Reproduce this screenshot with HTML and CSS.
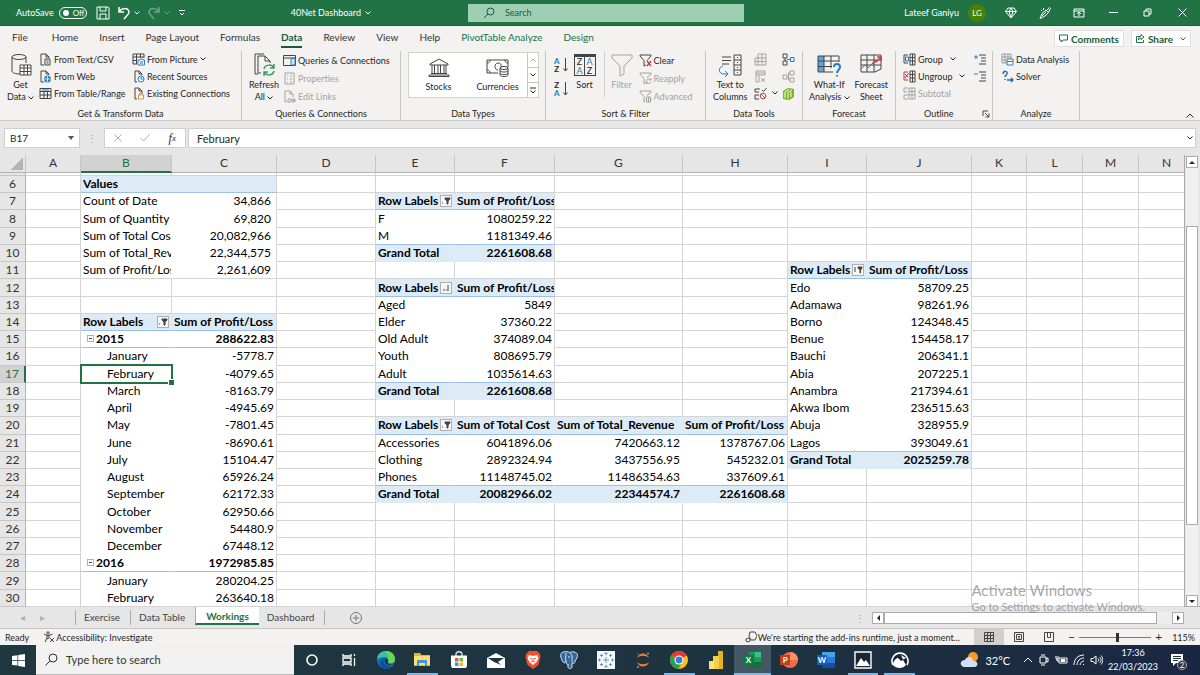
FILE: index.html
```
<!DOCTYPE html>
<html lang="en">
<head>
    <meta charset="UTF-8">
    <meta name="viewport" content="width=device-width, initial-scale=1.0">
    <title>40Net Dashboard - Excel</title>
    <link rel="stylesheet" href="styles.css">
</head>
<body>

    <!-- Title bar -->
    <header class="titlebar">
        <div class="title-left">
            <label class="autosave" for="autosave">AutoSave <input type="checkbox" id="autosave"><span class="toggle">Off</span></label>
            <button class="tb-btn" aria-label="Save"><svg width="14" height="14" viewBox="0 0 14 14"><path d="M1 1h11l1 1v11H1zM4 1v4h6V1M4 13V8h6v5" class="line-w"/></svg></button>
            <button class="tb-btn undo" aria-label="Undo"><svg width="14" height="14" viewBox="0 0 14 14"><path d="M2 1v5h5M2 6c2-4 9-5 10 0c0 3-3 4-5 7" class="line-w bold"/></svg><svg class="chev" width="6" height="4" viewBox="0 0 6 4"><path d="M.5.5 3 3 5.500.5"/></svg></button>
            <button class="tb-btn dim" aria-label="Redo"><svg width="14" height="14" viewBox="0 0 14 14"><path d="M12 1v5H7M12 6c-2-4-9-5-10 0c0 3 3 4 5 7" class="line-w bold"/></svg><svg class="chev" width="6" height="4" viewBox="0 0 6 4"><path d="M.5.5 3 3 5.500.5"/></svg></button>
            <button class="tb-btn qat" aria-label="Customize Quick Access Toolbar"><svg width="6" height="6" viewBox="0 0 6 6"><path d="M0 .5h6M1 3l2 2 2-2" class="line-w"/></svg></button>
            <button class="doc-title">40Net Dashboard <svg class="chev" width="6" height="4" viewBox="0 0 6 4"><path d="M.5.5 3 3 5.500.5"/></svg></button>
        </div>
        <div class="title-search">
            <svg width="12" height="12" viewBox="0 0 12 12"><circle cx="7.500" cy="4.500" r="3.500"/><path d="M5 7 1 11"/></svg>
            <input type="text" placeholder="Search" aria-label="Search">
        </div>
        <div class="title-right">
            <span>Lateef Ganiyu</span>
            <span class="avatar">LG</span>
            <button class="win-btn" aria-label="Premium"><svg width="12" height="12" viewBox="0 0 12 12"><path d="M3 1h6l2.500 3.500L6 11 .5 4.500zM.5 4.500h11M4 4.500 6 11l2-6.500L6 1 4 4.500" class="line-w"/></svg></button>
            <button class="win-btn" aria-label="Drawing"><svg width="12" height="12" viewBox="0 0 12 12"><path d="M1 11.500 3 6.500 7 3l2.500 2.500L6 9zM3 9l4-4M8 3l2.500-2.500 1 1L9.500 5M4.500 1v2M2 3l1 1" class="line-w"/></svg></button>
            <button class="win-btn" aria-label="Ribbon display options"><svg width="12" height="10" viewBox="0 0 12 10"><path d="M1 1h10v8H1zM1 3h10M6 8V4.500M4 6l2-2 2 2" class="line-w"/></svg></button>
            <button class="win-btn" aria-label="Minimize"><svg width="9" height="9" viewBox="0 0 9 9"><path d="M0 4.500h9" class="line-w"/></svg></button>
            <button class="win-btn" aria-label="Restore"><svg width="9" height="9" viewBox="0 0 9 9"><path d="M1 3h5v5H1zM3 3V1h5v5H6" class="line-w"/></svg></button>
            <button class="win-btn" aria-label="Close"><svg width="9" height="9" viewBox="0 0 9 9"><path d="M.5.5l8 8M8.500.5l-8 8" class="line-w"/></svg></button>
        </div>
    </header>

    <!-- Ribbon tabs -->
    <nav class="tabs">
        <a href="#" class="tab">File</a>
        <a href="#" class="tab">Home</a>
        <a href="#" class="tab">Insert</a>
        <a href="#" class="tab">Page Layout</a>
        <a href="#" class="tab">Formulas</a>
        <a href="#" class="tab active">Data</a>
        <a href="#" class="tab">Review</a>
        <a href="#" class="tab">View</a>
        <a href="#" class="tab">Help</a>
        <a href="#" class="tab context">PivotTable Analyze</a>
        <a href="#" class="tab context">Design</a>
        <div class="tab-actions">
            <button class="action"><svg width="9" height="9" viewBox="0 0 9 9"><path d="M.5 1h8v5H4L2 8V6H.5z"/></svg>Comments</button>
            <button class="action"><svg width="9" height="9" viewBox="0 0 9 9"><path d="M4 2.500H.5v6h7V6M5 .5l3 2.500-3 2.500V4C4 4 3 5 2.500 6 2.500 4 3 2.500 5 2z"/></svg>Share<svg class="chev" width="6" height="4" viewBox="0 0 6 4"><path d="M.5.5 3 3 5.500.5"/></svg></button>
        </div>
    </nav>

    <!-- Ribbon -->
    <section class="ribbon">
        <div class="group g-get">
            <div class="group-body">
                <button class="big"><svg class="ico" width="24" height="24" viewBox="0 0 24 24"><path class="k" d="M3 4v14c0 2 4 3 8 3M17 4v6"/><ellipse class="k" cx="10" cy="4" rx="7" ry="2.500"/><path class="k" fill="#fff" d="M11 12h11v10H11zM11 15h11M11 18.500h11M15 12v10M18.500 12v10"/></svg><span>Get<br>Data <svg class="chev" width="6" height="4" viewBox="0 0 6 4"><path d="M.5.5 3 3 5.500.5"/></svg></span></button>
                <div class="stack">
                    <button class="small"><svg class="ico" width="13" height="13" viewBox="0 0 13 13"><path class="k" d="M5 12H2V1h5l3 3v1M7 1v3h3M6 6h5v6H6zM7.500 8h2M7.500 10h2"/></svg>From Text/CSV</button>
                    <button class="small"><svg class="ico" width="13" height="13" viewBox="0 0 13 13"><path class="k" d="M5 12H2V1h5l3 3v1M7 1v3h3"/><circle cx="8.500" cy="9" r="3.500" fill="#2f87c5"/><path d="M5.500 9h6M8.500 6v6" stroke="#fff" stroke-width=".7"/></svg>From Web</button>
                    <button class="small"><svg class="ico" width="13" height="13" viewBox="0 0 13 13"><path class="k" d="M1 1.500h11v10H1zM1 4.500h11M1 8h11M5 4.500v7M8.500 4.500v7"/><path class="b" d="M3 3h7"/></svg>From Table/Range</button>
                </div>
                <div class="stack">
                    <button class="small"><svg class="ico" width="13" height="13" viewBox="0 0 13 13"><path class="k" d="M5 11H1V1h11v4M1 4h11M1 7.500h4M4.500 1v10M8.500 1v4"/><path class="b" fill="#fff" d="M6 7h2l.5-1h2l.5 1h1.500v5H6z"/><circle class="b" cx="9.500" cy="9.500" r="1.200"/></svg>From Picture <svg class="chev" width="6" height="4" viewBox="0 0 6 4"><path d="M.5.5 3 3 5.500.5"/></svg></button>
                    <button class="small"><svg class="ico" width="13" height="13" viewBox="0 0 13 13"><path class="k" d="M5 12H3V1h4l3 3v1M7 1v3h3"/><circle class="b" fill="#fff" cx="9" cy="9" r="3"/><path class="b" d="M9 7v2h2"/></svg>Recent Sources</button>
                    <button class="small"><svg class="ico" width="13" height="13" viewBox="0 0 13 13"><path class="k" d="M5 12H3V1h4l3 3v2M7 1v3h3"/><path d="M6.500 8h5v4h-5zM7.500 8V6.500h3V8" fill="#fff" stroke="#e08a2e"/></svg>Existing Connections</button>
                </div>
            </div>
            <div class="group-label">Get &amp; Transform Data</div>
        </div>

        <div class="group g-queries">
            <div class="group-body">
                <button class="big"><svg class="ico" width="24" height="24" viewBox="0 0 24 24"><path class="k" d="M6 21H3V1h9M9 20H6V3h7l5 5v2M13 3v5h5"/><path class="g" d="M12 16c1-5 8-5 10-1M22 11v4h-4M22 18c-1 5-8 5-10 1M12 23v-4h4"/></svg><span>Refresh<br>All <svg class="chev" width="6" height="4" viewBox="0 0 6 4"><path d="M.5.5 3 3 5.500.5"/></svg></span></button>
                <div class="stack loose">
                    <button class="small"><svg class="ico" width="13" height="13" viewBox="0 0 13 13"><path class="k" d="M.5 1.500h12v10H.5zM.5 4h12"/><path class="b" fill="#d5e8f5" d="M8 4.500h4v6.500H8z"/></svg>Queries &amp; Connections</button>
                    <button class="small" disabled><svg class="ico" width="13" height="13" viewBox="0 0 13 13"><path class="k" d="M2 1h9v11H2zM4 4h1M4 7h1M4 10h1M7 4h2M7 7h2M7 10h2"/></svg>Properties</button>
                    <button class="small" disabled><svg class="ico" width="13" height="13" viewBox="0 0 13 13"><path class="k" d="M4 12H2V1h5l3 3v3M7 1v3h3M5 9h3v3H5zM8 10.500h4M9 9h3v3H9"/></svg>Edit Links</button>
                </div>
            </div>
            <div class="group-label">Queries &amp; Connections</div>
        </div>

        <div class="group g-types">
            <div class="group-body">
                <div class="gallery">
                    <button class="type"><svg class="ico" width="22" height="20" viewBox="0 0 22 20"><path class="k" d="M2 6l9-5 9 5v1H2zM4 7v8M6.500 7v8M10 7v8M12.500 7v8M16 7v8M18 7v8M3 15.500h16M1 18.500h20v-1.500H1z"/></svg>Stocks</button>
                    <button class="type"><svg class="ico" width="24" height="20" viewBox="0 0 24 20"><path class="k" d="M12 15H1V2h21v7M4 15c0-2-1-3-3-3M1 5c2 0 3-1 3-3M19 2c0 2 1 3 3 3M12 12c-4 0-4-7 0-7s3 3 3 4"/><path class="k" fill="#fff" d="M14 10v7c0 2 8 2 8 0v-7M14 12.500c0 2 8 2 8 0M14 15c0 2 8 2 8 0"/><ellipse class="k" fill="#fff" cx="18" cy="10" rx="4" ry="1.500"/></svg>Currencies</button>
                    <div class="gallery-nav">
                        <button aria-label="Previous" disabled><svg class="chev" width="6" height="4" viewBox="0 0 6 4"><path d="M.5 3.500 3 1l2.500 2.500"/></svg></button>
                        <button aria-label="Next"><svg class="chev" width="6" height="4" viewBox="0 0 6 4"><path d="M.5.5 3 3 5.500.5"/></svg></button>
                        <button aria-label="More"><svg class="chev" width="6" height="7" viewBox="0 0 6 7"><path d="M0 1h6M.5 3.500 3 6l2.500-2.500"/></svg></button>
                    </div>
                </div>
            </div>
            <div class="group-label">Data Types</div>
        </div>

        <div class="group g-sort">
            <div class="group-body">
                <div class="az-col">
                    <button class="az" aria-label="Sort A to Z"><span class="az-text"><i>A</i>Z</span><svg class="ico" width="5" height="14" viewBox="0 0 5 14"><path class="k" d="M2.500 0v13M.5 10.500l2 2.500 2-2.500"/></svg></button>
                    <button class="az" aria-label="Sort Z to A"><span class="az-text">Z<i>A</i></span><svg class="ico" width="5" height="14" viewBox="0 0 5 14"><path class="k" d="M2.500 0v13M.5 10.500l2 2.500 2-2.500"/></svg></button>
                </div>
                <button class="big sort"><span class="sort-box"><b>Z</b><i>A</i><i>A</i><b>Z</b></span><span>Sort</span></button>
                <button class="big filter" disabled><svg class="ico" width="22" height="24" viewBox="0 0 22 24"><path class="k" d="M1 2h20v3l-8 8v8l-4 2V13L1 5z"/></svg><span>Filter</span></button>
                <div class="stack loose">
                    <button class="small"><svg class="ico" width="13" height="13" viewBox="0 0 13 13"><path class="k" d="M1 1h11v1L8 6.500M5 12V6.500L1 2V1M5 12l2-1"/><path d="M8 7l4 5M12 7l-4 5" stroke="#d13438" stroke-width="1.300"/></svg>Clear</button>
                    <button class="small" disabled><svg class="ico" width="13" height="13" viewBox="0 0 13 13"><path class="k" d="M1 1h11v1L8 5.500M5 12V6.500L1 2V1M5 12l1-.5M7 9c1-3 4-2 5-1M12 6v2h-2M12 10c-1 2-4 2-5 0M7 12v-2h2"/></svg>Reapply</button>
                    <button class="small" disabled><svg class="ico" width="13" height="13" viewBox="0 0 13 13"><path class="k" d="M1 1h11v1L8 5.500M5 12V6.500L1 2V1M5 12l1-.5M7.500 7h4v5h-4zM11.500 9.500h1M6.500 9.500h1M9.500 7v5"/></svg>Advanced</button>
                </div>
            </div>
            <div class="group-label">Sort &amp; Filter</div>
        </div>

        <div class="group g-tools">
            <div class="group-body">
                <button class="big"><svg class="ico" width="24" height="24" viewBox="0 0 24 24"><path class="k" d="M4 4h9M4 7.500h9M4 11h7M16 2h7v20h-7zM16 7h7M16 12h7M16 17h7M19 4.500h1M19 9.500h1M19 14.500h1M19 19.500h1"/><path class="b" d="M5 13c-5 1-5 8 1 8h3M7 18l3 3-3 3"/></svg><span>Text to<br>Columns</span></button>
                <div class="stack icons">
                    <button class="small" aria-label="Flash Fill" disabled><svg class="ico" width="13" height="13" viewBox="0 0 13 13"><path class="k" d="M4 1h8v11H1V5h3zM4 5h8M1 8.500h11M4 5v7M8 1v11"/></svg></button>
                    <button class="small" aria-label="Remove Duplicates" disabled><svg class="ico" width="13" height="13" viewBox="0 0 13 13"><path class="k" d="M2 1h9v4H2zM2 3h9M2 5v7h3V5M7 8l4 4M11 8l-4 4"/></svg></button>
                    <button class="small" aria-label="Data Validation"><svg class="ico" width="13" height="13" viewBox="0 0 13 13"><path class="k" d="M6 2H1v3h4M5 8H1v4h4M8 3l1.500 1.500L12.500 1"/><circle cx="9" cy="9" r="2.800" stroke="#d13438" fill="#fff"/><path d="M7 7l4 4" stroke="#d13438"/></svg><svg class="chev" width="6" height="4" viewBox="0 0 6 4"><path d="M.5.5 3 3 5.500.5"/></svg></button>
                </div>
                <div class="stack icons">
                    <button class="small" aria-label="Consolidate"><svg class="ico" width="13" height="13" viewBox="0 0 13 13"><path class="k" d="M1 1h4v4H1zM1 8h4v4H1zM3 5v3"/><path class="b" d="M5 6.500h3M8.500 4.500H12v4H8.500z"/></svg></button>
                    <button class="small" aria-label="Relationships" disabled><svg class="ico" width="13" height="13" viewBox="0 0 13 13"><path class="k" d="M1 5h4v4H1zM8 1h4v4H8zM8 8h4v4H8zM5 7h1.500V3H8M6.500 7v3H8"/></svg></button>
                    <button class="small" aria-label="Manage Data Model"><svg class="ico" width="13" height="13" viewBox="0 0 13 13"><path fill="#7ab51d" d="M1 4l5-3 6 1v8l-5 3-6-1z"/><path d="M3 11V5l4-2.500M6 11.500V5.500l4-2.500M9 10V5" stroke="#fff"/></svg></button>
                </div>
            </div>
            <div class="group-label">Data Tools</div>
        </div>

        <div class="group g-forecast">
            <div class="group-body">
                <button class="big"><svg class="ico" width="24" height="24" viewBox="0 0 24 24"><path fill="#58a6dd" d="M1 3h6v16H1z"/><path class="k" d="M16 19H1V3h21v6M1 8h21M1 13.500h14M7 3v16M14 3v12"/><path class="b thick" d="M17 14c0-4 6-4 6 0 0 3-3 3-3 6M20 22v1.500"/></svg><span>What-If<br>Analysis <svg class="chev" width="6" height="4" viewBox="0 0 6 4"><path d="M.5.5 3 3 5.500.5"/></svg></span></button>
                <button class="big"><svg class="ico" width="24" height="24" viewBox="0 0 24 24"><path class="k" d="M2 2h20v14l-6 3H2zM2 7h20M2 12h20M8 2v17M15 2v17"/><path class="b" d="M2 16l4-4 3 3 4-4"/><path d="M13 11l3-3 1 1 5-5M18 4h4v4" stroke="#d13438" stroke-width="1.300"/></svg><span>Forecast<br>Sheet</span></button>
            </div>
            <div class="group-label">Forecast</div>
        </div>

        <div class="group g-outline">
            <div class="group-body">
                <div class="stack">
                    <button class="small"><svg class="ico" width="13" height="13" viewBox="0 0 13 13"><path class="k" d="M5 2H1v8h4M7 1h5v11H7zM7 4.500h5M7 8h5M9.500 1v11"/><path class="b" d="M2.500 4h3v4h-3z"/></svg>Group <svg class="chev far" width="6" height="4" viewBox="0 0 6 4"><path d="M.5.5 3 3 5.500.5"/></svg></button>
                    <button class="small"><svg class="ico" width="13" height="13" viewBox="0 0 13 13"><path class="k" d="M7 1h5v11H7zM7 4.500h5M7 8h5M9.500 1v11"/><path d="M5 2H1v8h4M2 8l4-5M2 4l3 3" stroke="#d13438"/></svg>Ungroup <svg class="chev far" width="6" height="4" viewBox="0 0 6 4"><path d="M.5.5 3 3 5.500.5"/></svg></button>
                    <button class="small" disabled><svg class="ico" width="13" height="13" viewBox="0 0 13 13"><path class="k" d="M5 1H1v4h3M5 8H1v4h4M6 1h6v11H6zM6 4.500h6M6 8h6M9 1v11"/></svg>Subtotal</button>
                </div>
                <div class="stack end">
                    <button class="small" aria-label="Show Detail"><svg class="ico" width="13" height="13" viewBox="0 0 13 13"><path class="b" d="M0 4h4M2 2v4"/><path class="k" d="M5 2h7M7 5h5M7 8h5M5 11h7"/></svg></button>
                    <button class="small" aria-label="Hide Detail"><svg class="ico" width="13" height="13" viewBox="0 0 13 13"><path class="b" d="M0 4h4"/><path class="k" d="M5 2h7M7 5h5M7 8h5M5 11h7"/></svg></button>
                </div>
            </div>
            <div class="group-label">Outline<button class="launcher" aria-label="Outline settings"><svg class="ico" width="8" height="8" viewBox="0 0 8 8"><path class="k" d="M1 6V1h5M3 3l4 4M7 3.500V7H3.500"/></svg></button></div>
        </div>

        <div class="group g-analyze">
            <div class="group-body">
                <div class="stack">
                    <button class="small"><svg class="ico" width="13" height="13" viewBox="0 0 13 13"><path stroke="#9a9a9a" d="M1 1h9v9H1zM1 4h9M1 7h4M4 1v9M7 1v4"/><path fill="#fff" class="b" d="M6 6h6v6H6zM6 8.500h6"/></svg>Data Analysis</button>
                    <button class="small"><svg class="ico" width="13" height="13" viewBox="0 0 13 13"><path stroke="#2b6cb0" stroke-width="1.500" d="M2 4c0-4 5-3 4 0-.5 1-2 1-2 3M4 9v1M6 10h6M10 8l2 2-2 2"/></svg>Solver</button>
                </div>
            </div>
            <div class="group-label">Analyze</div>
        </div>
        <button class="collapse" aria-label="Collapse ribbon"><svg class="chev" width="8" height="5" viewBox="0 0 8 5"><path d="M.5 4.500 4 1l3.500 3.500"/></svg></button>
    </section>

    <!-- Formula bar -->
    <section class="formula">
        <div class="namebox"><input type="text" value="B17" aria-label="Name box"><span class="caret"></span></div>
        <span class="dots">⋮</span>
        <div class="fx">
            <button aria-label="Cancel" disabled><svg width="8" height="8" viewBox="0 0 8 8"><path d="M.5.5l7 7M7.500.5l-7 7"/></svg></button>
            <button aria-label="Enter" disabled><svg width="10" height="8" viewBox="0 0 10 8"><path d="M.5 4l3 3L9.500.5"/></svg></button>
            <button aria-label="Insert function" class="fn">f<sub>x</sub></button>
        </div>
        <div class="formula-input"><input type="text" value="February" aria-label="Formula"><svg class="chev" width="6" height="4" viewBox="0 0 6 4"><path d="M.5.5 3 3 5.500.5"/></svg></div>
    </section>

    <!-- Worksheet -->
    <main class="sheet">
        <div class="grid-wrap">
            <table class="grid" id="grid"></table>
        </div>
        <div class="vscroll">
            <button aria-label="Scroll up"><span class="tri up"></span></button>
            <div class="vtrack"><div class="vthumb"></div></div>
            <button aria-label="Scroll down"><span class="tri down"></span></button>
        </div>
        <div class="watermark"><strong>Activate Windows</strong><span>Go to Settings to activate Windows.</span></div>
    </main>

    <!-- Sheet tabs -->
    <nav class="sheetbar">
        <div class="sheet-nav"><span>◂</span><span>▸</span></div>
        <a href="#" class="sheet-tab">Exercise</a>
        <a href="#" class="sheet-tab">Data Table</a>
        <a href="#" class="sheet-tab active">Workings</a>
        <a href="#" class="sheet-tab">Dashboard</a>
        <button class="add" aria-label="New sheet"><svg width="12" height="12" viewBox="0 0 12 12"><circle cx="6" cy="6" r="5.500"/><path d="M6 3v6M3 6h6"/></svg></button>
        <div class="hscroll">
            <span class="dots">⋮</span>
            <button aria-label="Scroll left"><span class="tri left"></span></button>
            <div class="htrack"><div class="hthumb"></div></div>
            <button aria-label="Scroll right"><span class="tri right"></span></button>
        </div>
    </nav>

    <!-- Status bar -->
    <footer class="status">
        <span>Ready</span>
        <span class="access"><svg class="ico" width="12" height="12" viewBox="0 0 12 12"><circle class="k" cx="5" cy="2" r="1.200"/><path class="k" d="M1 3l3 1.500h2L9.500 3M4 4.500V7l-2 4M6 4.500V7M7 7l4 4M11 7l-4 4M4 8l2-1"/></svg>Accessibility: Investigate</span>
        <span class="addins"><svg class="ico" width="12" height="12" viewBox="0 0 12 12"><path class="k" d="M5 1h5l2 4-2 4H6L4 5zM3 7l2 1v2l-2 1-2-1V8z"/></svg>We're starting the add-ins runtime, just a moment...</span>
        <div class="views">
            <button class="view on" aria-label="Normal"><svg class="ico" width="10" height="10" viewBox="0 0 10 10"><path class="k" d="M.5.5h9v9h-9zM.5 3.500h9M.5 6.500h9M3.500.5v9M6.500.5v9"/></svg></button>
            <button class="view" aria-label="Page layout"><svg class="ico" width="10" height="10" viewBox="0 0 10 10"><path class="k" d="M.5.5h9v9h-9zM2.500 2.500h5v5h-5zM4 4.500h2M4 6h2"/></svg></button>
            <button class="view" aria-label="Page break preview"><svg class="ico" width="10" height="10" viewBox="0 0 10 10"><path class="k" d="M.5.5h9v9h-9zM3.500.5v5h3v-5"/></svg></button>
        </div>
        <div class="zoom">
            <button aria-label="Zoom out">−</button>
            <input type="range" min="0" max="100" value="53" aria-label="Zoom">
            <button aria-label="Zoom in">+</button>
            <span>115%</span>
        </div>
    </footer>

    <!-- Taskbar -->
    <footer class="taskbar">
        <button class="start" aria-label="Start"><svg width="13" height="13" viewBox="0 0 13 13"><path fill="#fff" d="M0 2l5.500-.8V6H0zM6.200 1.100 13 0v6H6.200zM0 6.700h5.500v4.900L0 10.900zM6.200 6.700H13V13l-6.800-1z"/></svg></button>
        <div class="task-search"><svg width="13" height="13" viewBox="0 0 13 13"><circle cx="8" cy="5" r="4"/><path d="M5 8l-4.500 4.500"/></svg><input type="text" placeholder="Type here to search" aria-label="Type here to search"></div>
        <div class="apps">
            <button class="app" aria-label="Cortana"><svg width="18" height="18" viewBox="0 0 18 18"><circle cx="9" cy="9" r="5" fill="none" stroke="#fff" stroke-width="1.600"/></svg></button>
            <button class="app" aria-label="Task view"><svg width="18" height="18" viewBox="0 0 18 18"><path d="M3 3v2h8V3M3 7h8v4H3zM3 15v-2h8v2M14.500 3v2M14.500 7v8" fill="none" stroke="#fff" stroke-width="1.300"/></svg></button>
            <button class="app" aria-label="Edge"><svg width="20" height="20" viewBox="0 0 20 20"><circle cx="10" cy="10" r="9" fill="#1670b8"/><path d="M1 10C1 4 5 1 10 1c6 0 9 4 9 8 0 4-4 5-7 4 1-1 1-5-3-6-4 0-7 1-8 3z" fill="#35c1a2"/><path d="M9 1c6-.5 10 4 10 8 0 4-4 5-7 4 1-1 1-3 0-4 1-3-1-6-3-8z" fill="#69d84f"/><path d="M8 8c-2 5 2 9 9 8-5 5-12 3-13-2 0-3 1-5 4-6z" fill="#0c50a0"/><path d="M9 9c2-1 3 0 3 2l-.5 2c1 1 3 1.500 5 1-2 2-6 1-7-1-1-1-1-3-.5-4z" fill="#20343f"/></svg></button>
            <button class="app open" aria-label="File Explorer"><svg width="18" height="18" viewBox="0 0 18 18"><path fill="#e8b33a" d="M1 2h6l1.500 2H17v11H1z"/><path fill="#ffdd78" d="M1 5h16v9H1z"/><path fill="#3f98d8" d="M4 9h10v6h-2v-3H6v3H4z"/></svg></button>
            <button class="app" aria-label="Microsoft Store"><svg width="18" height="18" viewBox="0 0 18 18"><path d="M6 5V3c0-3 6-3 6 0v2" fill="none" stroke="#dce6ea" stroke-width="1.300"/><path fill="#fff" d="M1 4.500h16V15l-1 2H2l-1-2z"/><path fill="#e9573f" d="M5 7h3.500v3.500H5z"/><path fill="#6cb43f" d="M9.500 7H13v3.500H9.500z"/><path fill="#2c96d6" d="M5 11.500h3.500V15H5z"/><path fill="#f5b92b" d="M9.500 11.500H13V15H9.500z"/></svg></button>
            <button class="app" aria-label="Mail"><svg width="20" height="18" viewBox="0 0 20 18"><path fill="#fff" d="M1 7l9-5 9 5v10H1z"/><path fill="#20343f" d="M2 7h16l-6 4 3 3-7-3z"/></svg></button>
            <button class="app" aria-label="Brave"><svg width="18" height="20" viewBox="0 0 18 20"><path fill="#f0502a" d="M5 1h8l3 3 .5 3-2 8L9 19l-5.500-4-2-8L2 4z"/><path fill="#fff" d="M5 5l4 1 4-1 1.500 3-2 4L9 15l-3.500-3-2-4z"/><path d="M6 8l2 1M12 8l-2 1M9 8v3M7 12l2-1 2 1" stroke="#f0502a" fill="none"/></svg></button>
            <button class="app" aria-label="pgAdmin"><svg width="20" height="20" viewBox="0 0 20 20"><path fill="#35689a" stroke="#dce6ef" d="M5 2c-4 0-4 4-2 8 1 3 3 4 4 1 0 3 1 4 2 3v3c0 2 4 2 4 0v-4c2 1 4-1 3-2 3-4 4-8-1-9-2-.500-3 0-4 .500C9 1.500 7 1.500 5 2z"/><path d="M7 11c-1-2 0-5 0-8M11 3c3 2 2 6 2 9M10 6v2" stroke="#dce6ef" fill="none"/></svg></button>
            <button class="app" aria-label="Tableau"><svg width="18" height="18" viewBox="0 0 18 18"><path fill="#f4f7fa" d="M0 0h18v18H0z"/><path d="M9 6v6M6 9h6M9 1v3M7.500 2.500h3M9 14v3M7.500 15.500h3M2.500 7.500v3M1 9h3M15.500 7.500v3M14 9h3M4.500 3v3M3 4.500h3M13.500 3v3M12 4.500h3M4.500 12v3M3 13.500h3M13.500 12v3M12 13.500h3" stroke="#5a7fa5" stroke-width=".8" fill="none"/></svg></button>
            <button class="app" aria-label="Jupyter"><svg width="18" height="18" viewBox="0 0 18 18"><path fill="#ef7f32" d="M3 7c2-6 10-6 12 0-3-3-9-3-12 0zM3 11c2 6 10 6 12 0-3 3-9 3-12 0z"/><g fill="#9aa5ab"><circle cx="14" cy="2.500" r="1"/><circle cx="4" cy="3" r=".6"/><circle cx="4" cy="16" r="1"/></g></svg></button>
            <button class="app open" aria-label="Chrome"><svg width="20" height="20" viewBox="0 0 20 20"><circle cx="10" cy="10" r="9" fill="#fbc116"/><path fill="#e33b2e" d="M10 10 2.200 5.500a9 9 0 0 1 15.600 0z"/><path fill="#2da04f" d="M10 10 2.200 5.500A9 9 0 0 0 9.500 19L13 12z"/><circle cx="10" cy="10" r="4.500" fill="#fff"/><circle cx="10" cy="10" r="3.400" fill="#3b78e7"/></svg></button>
            <button class="app" aria-label="Power BI"><svg width="18" height="20" viewBox="0 0 18 20"><path fill="#e8b11c" d="M11 1h5v18h-5z"/><path fill="#f6cf45" d="M6 6h6v13H6z"/><path fill="#fbe07c" d="M2 11h5v8H2z"/></svg></button>
            <button class="app open current" aria-label="Excel"><svg width="20" height="20" viewBox="0 0 20 20"><path fill="#1f9a5d" d="M6 2h12v16H6z"/><path fill="#35c481" d="M12 2h6v5h-6z"/><path fill="#1a6c40" d="M12 12h6v6h-6zM6 12h6v6H6z"/><path fill="#107c41" d="M1 5h10v10H1z"/></svg><b>X</b></button>
            <button class="app" aria-label="PowerPoint"><svg width="20" height="20" viewBox="0 0 20 20"><circle cx="11" cy="10" r="8" fill="#ed6c47"/><path fill="#ff8f6b" d="M11 2a8 8 0 0 1 8 8h-8z"/><path fill="#c43e1c" d="M1 5h10v10H1z"/></svg><b>P</b></button>
            <button class="app" aria-label="Word"><svg width="20" height="20" viewBox="0 0 20 20"><path fill="#41a5ee" d="M6 2h13v5H6z"/><path fill="#2b7cd3" d="M6 7h13v6H6z"/><path fill="#164d9b" d="M6 13h13v5H6z"/><path fill="#185abd" d="M1 5h10v10H1z"/></svg><b>W</b></button>
            <button class="app open" aria-label="Photos"><svg width="18" height="18" viewBox="0 0 18 18"><path d="M1 1h16v16H1z" fill="#1b2631" stroke="#fff" stroke-width="1.400"/><path fill="#fff" d="M2 15l5-8 3 4 2-2 4 6z"/></svg></button>
            <button class="app open" aria-label="Snip"><svg width="20" height="18" viewBox="0 0 20 18"><path d="M3 14a8 8 0 1 1 14 0" fill="#1b2631" stroke="#fff" stroke-width="1.600"/><path fill="#fff" d="M3 14c0-4 3-7 5-7l3 3 2-1 3 5c-3 4-10 4-13 0zM11 4l5 3-3 1.500z"/></svg></button>
        </div>
        <div class="tray">
            <svg width="20" height="18" viewBox="0 0 20 18"><circle cx="13" cy="6" r="5" fill="#f59b23"/><path fill="#cfe0f5" d="M4 16c-5-1-4-7 1-7 1-4 8-4 8 1 5-1 6 5 2 6z"/></svg>
            <span class="temp">32°C</span>
            <svg class="t-ico" width="10" height="12" viewBox="0 0 10 12"><path d="M1 8l4-4 4 4"/></svg>
            <svg class="t-ico" width="12" height="12" viewBox="0 0 12 12"><path d="M2 3h6v6H2zM8 5l2-1v4L8 7M3 1h4M3 11h4"/></svg>
            <svg class="t-ico" width="13" height="12" viewBox="0 0 13 12"><path d="M4 4h8v5H4zM1 2v3h2V2M2 5v2h2"/><path fill="#fff" d="M6 5.500h4v2H6z"/></svg>
            <svg class="t-ico" width="12" height="12" viewBox="0 0 12 12"><path d="M1 11C1 5 5 1 11 1M4 11c0-4 3-7 7-7M7 11c0-2 2-4 4-4M10 11l1-1"/></svg>
            <svg class="t-ico" width="13" height="12" viewBox="0 0 13 12"><path d="M1 4.500h2L6 2v8L3 7.500H1zM8 4.500c1 1 1 2 0 3M9.500 3c2 2 2 4 0 6M11 1.500c2.500 3 2.500 6 0 9"/></svg>
            <div class="clock">17:36<br>22/03/2023</div>
            <button class="notify" aria-label="Notifications"><svg width="14" height="14" viewBox="0 0 14 14"><path fill="#fff" d="M1 1h12v9H6l-3 3v-3H1z"/><path d="M3 3.500h8M3 5.500h8M3 7.500h5" stroke="#20343f"/></svg><span class="count">2</span></button>
        </div>
    </footer>

    <script src="script.js"></script>
</body>
</html>
```

FILE: styles.css
```
* {
    box-sizing: border-box;
}
body {
    margin: 0;
    height: 100vh;
    display: flex;
    flex-direction: column;
    overflow: hidden;
    font-family: Lato, "Open Sans", sans-serif;
    font-size: 9px;
    color: #262626;
    background: #e6e6e6;
}
button, input {
    font: inherit;
    color: inherit;
    background: none;
    border: none;
    padding: 0;
    margin: 0;
    outline: none;
}
button {
    display: flex;
    align-items: center;
    justify-content: center;
}
a {
    color: inherit;
    text-decoration: none;
}
svg {
    flex: none;
}
.chev {
    fill: none;
    stroke: currentColor;
}

/* icon strokes */
.ico {
    fill: none;
}
.k {
    stroke: #444;
}
.b {
    stroke: #2b7cc0;
}
.g {
    stroke: #3c9a5f;
    stroke-width: 1.5;
}
.thick {
    stroke-width: 2;
}
.line-w {
    fill: none;
    stroke: #fff;
}
.bold {
    stroke-width: 1.5;
}
button:disabled {
    color: #a3a3a3;
}
button:disabled .k {
    stroke: #a3a3a3;
}

/* title bar */
.titlebar {
    display: grid;
    grid-template-columns: 39% 23% 38%;
    align-items: center;
    height: 26px;
    background: #217346;
    border-bottom: 1px solid #17613a;
    color: #fff;
}
.title-left {
    display: flex;
    align-items: center;
    padding: 0 97px 0 16px;
}
.autosave {
    display: flex;
    align-items: center;
    gap: 5px;
    margin-right: 9px;
}
.autosave input {
    position: absolute;
    opacity: 0;
}
.toggle {
    display: flex;
    align-items: center;
    gap: 4px;
    width: 28px;
    height: 12px;
    padding-left: 3px;
    border: 1px solid #fff;
    border-radius: 6px;
    font-size: 8px;
}
.toggle::before {
    content: "";
    width: 6px;
    height: 6px;
    border-radius: 50%;
    background: #fff;
}
.tb-btn {
    gap: 3px;
    margin-right: 7px;
}
.dim {
    opacity: 0.35;
}
.qat {
    margin-left: 2px;
}
.doc-title {
    gap: 4px;
    margin-left: auto;
}
.title-search {
    display: flex;
    align-items: center;
    gap: 10px;
    height: 18px;
    padding-left: 15px;
    background: #9fcfb3;
    color: #185c37;
}
.title-search svg {
    fill: none;
    stroke: #185c37;
}
.title-search input::placeholder {
    color: #185c37;
    opacity: 1;
}
.title-right {
    display: flex;
    align-items: center;
    justify-content: flex-end;
}
.avatar {
    width: 18px;
    height: 18px;
    margin: 0 8px 0 9px;
    border-radius: 50%;
    background: #498205;
    font-size: 8px;
    line-height: 18px;
    text-align: center;
}
.win-btn {
    width: 34px;
    height: 25px;
}
.win-btn:last-child {
    width: 36px;
}

/* ribbon tabs */
.tabs {
    display: flex;
    align-items: center;
    gap: 21px;
    height: 25px;
    padding: 0 9px 0 12px;
    background: #f3f2f1;
    font-size: 10px;
    color: #333;
}
.tab {
    height: 19px;
    line-height: 17px;
}
.tab:first-child {
    margin-right: 3px;
}
.tab.active {
    border-bottom: 2px solid #185c37;
    color: #185c37;
    font-weight: bold;
}
.tab.context {
    color: #217346;
}
.tab-actions {
    display: flex;
    gap: 7px;
    margin-left: auto;
}
.action {
    gap: 3px;
    height: 17px;
    padding: 0 4px;
    border: 1px solid #e1dfdd;
    background: #fff;
    color: #185c37;
    font-weight: bold;
}
.action svg {
    fill: none;
    stroke: #217346;
}
.action .chev {
    margin-left: 4px;
}

/* ribbon */
.ribbon {
    display: flex;
    height: 70px;
    background: #f3f2f1;
    border-bottom: 1px solid #cfcdcb;
}
.group {
    display: flex;
    flex-direction: column;
    justify-content: space-between;
    border-right: 1px solid #c8c6c4;
}
.group-body {
    display: flex;
    gap: 6px;
    height: 54px;
}
.group-label {
    display: flex;
    justify-content: center;
    line-height: 13px;
}
.g-get {
    width: 242px;
}
.g-queries {
    width: 159px;
}
.g-types {
    width: 145px;
}
.g-sort {
    width: 160px;
}
.g-tools {
    width: 97px;
}
.g-forecast {
    width: 93px;
}
.g-outline {
    width: 97px;
}
.g-analyze {
    width: 87px;
}
.big {
    flex-direction: column;
    justify-content: flex-start;
    gap: 2px;
    padding-top: 2px;
    line-height: 12px;
}
.stack {
    display: flex;
    flex-direction: column;
    gap: 1px;
}
.stack.loose {
    gap: 2px;
    padding-top: 1px;
}
.small {
    justify-content: flex-start;
    gap: 2px;
    height: 16px;
    white-space: nowrap;
}
.g-get .group-body {
    padding-left: 8px;
}
.g-get .stack:first-of-type {
    width: 87px;
}
.g-get .big {
    width: 25px;
    white-space: nowrap;
}
.g-queries .group-body {
    gap: 4px;
    padding-left: 7px;
}
.g-types .group-body {
    padding: 1px 0 0 7px;
}
.gallery {
    display: flex;
    width: 131px;
    height: 46px;
    border: 1px solid #d2d0ce;
    background: #fff;
}
.type {
    flex: 1;
    flex-direction: column;
    gap: 3px;
}
.gallery-nav {
    display: flex;
    flex-direction: column;
    width: 11px;
    border-left: 1px solid #c8c6c4;
}
.gallery-nav button {
    flex: 1;
}
.gallery-nav button + button {
    border-top: 1px solid #c8c6c4;
}
.g-sort .group-body {
    padding-left: 8px;
}
.az-col {
    display: flex;
    flex-direction: column;
    gap: 8px;
    padding-top: 6px;
}
.az {
    gap: 3px;
}
.az-text {
    display: flex;
    flex-direction: column;
    font-size: 8px;
    line-height: 8px;
    font-weight: bold;
}
.az-text i, .sort-box i {
    font-style: normal;
    color: #2b7cc0;
}
.sort {
    padding-right: 8px;
    border-right: 1px solid #d2d0ce;
    height: 46px;
}
.sort-box {
    display: grid;
    grid-template-columns: 1fr 1fr;
    width: 22px;
    height: 22px;
    margin: 1px 0;
    border: 1px solid #444;
    border-top-width: 3px;
    font-size: 9px;
    line-height: 9px;
    background: linear-gradient(#444, #444) center / 1px 100% no-repeat;
}
.sort-box b {
    font-weight: normal;
}
.g-tools .group-body {
    padding-left: 7px;
}
.icons .small {
    width: 22px;
    gap: 5px;
}
.g-forecast .group-body {
    gap: 5px;
    padding-left: 6px;
}
.g-outline .group-body {
    justify-content: space-between;
    padding: 0 5px 0 7px;
}
.g-outline .group-label {
    padding-left: 28px;
    justify-content: space-between;
}
.g-analyze .group-body {
    padding-left: 8px;
}
.far {
    margin-left: 5px;
}
.launcher {
    width: 12px;
}
.collapse {
    align-self: flex-end;
    margin: 0 6px 2px auto;
}

/* formula bar */
.formula {
    display: flex;
    align-items: center;
    height: 34px;
    padding: 0 4px;
    font-size: 10px;
}
.namebox, .fx, .formula-input {
    display: flex;
    align-items: center;
    height: 20px;
    border: 1px solid #cfcfcf;
    background: #fff;
}
.namebox {
    width: 76px;
    padding: 0 5px;
}
.namebox input {
    width: 100%;
}
.caret {
    border: 3px solid transparent;
    border-top: 4px solid #555;
    border-bottom: none;
}
.dots {
    width: 24px;
    text-align: center;
    color: #999;
}
.fx {
    justify-content: space-around;
    width: 82px;
    margin-right: 2px;
}
.fx svg {
    fill: none;
    stroke: #b0b0b0;
}
.fn {
    font-family: "Liberation Serif", serif;
    font-size: 12px;
    font-style: italic;
    line-height: 12px;
}
.fn sub {
    font-size: 9px;
}
.formula-input {
    flex: 1;
    padding: 0 2px 0 8px;
}
.formula-input input {
    flex: 1;
    font-size: 11px;
}

/* worksheet */
.sheet {
    position: relative;
    display: flex;
    flex: 1;
    min-height: 0;
    margin-bottom: -1px;
}
.grid-wrap {
    flex: 1;
    overflow: hidden;
    border-right: 1px solid #ababab;
}
.grid {
    table-layout: fixed;
    width: 1195px;
    height: 100%;
    border-collapse: separate;
    border-spacing: 0;
    background: #fff;
    font-size: 12px;
    color: #000;
}
.grid th, .grid td {
    padding: 0;
    line-height: 14px;
    font-weight: normal;
    white-space: nowrap;
    overflow: hidden;
    border-right: 1px solid #d4d4d4;
    border-bottom: 1px solid #d4d4d4;
}
.grid th {
    background: #e6e6e6;
    color: #333;
}
.grid thead th {
    height: 18px;
    padding-bottom: 1px;
    border-color: #b4b4b4;
    border-right-color: #c6c6c6;
}
.grid thead th.on {
    background: #d2d2d2;
    border-bottom: 2px solid #217346;
    padding-bottom: 0;
    color: #217346;
}
.grid .sliver td, .grid .sliver th {
    height: 3px;
    line-height: 2px;
}
.grid tbody th {
    border-right-color: #b4b4b4;
    border-bottom-color: #c6c6c6;
}
.grid tbody th.on {
    background: #d2d2d2;
    border-right: 2px solid #217346;
    color: #217346;
}
.corner {
    display: block;
    width: 12px;
    height: 12px;
    margin: 2px 0 0 11px;
    background: linear-gradient(135deg, transparent 50%, #b4b4b4 50%);
}
.grid td.pivot {
    padding: 0 2px;
    border-color: #fff;
}
.grid td.pivot.edge {
    border-right-color: #d4d4d4;
}
.grid td.last {
    border-bottom-color: #d4d4d4;
}
.grid td.num {
    text-align: right;
}
.grid td.wide {
    padding-right: 5px;
}
.grid td.month {
    padding-left: 26px;
}
.grid td.shade {
    background: #ddebf7;
    border-color: #ddebf7;
}
.grid td.strong {
    font-weight: bold;
}
.grid td.rule {
    border-bottom-color: #9bc2e6;
}
.label {
    display: flex;
    align-items: center;
    justify-content: space-between;
}
.collapse-row {
    display: inline-flex;
    width: 7px;
    height: 7px;
    margin: 0 2px 1px 4px;
    border: 1px solid #9fb3cc;
    background: linear-gradient(#444, #444) center / 3px 1px no-repeat;
}
.drop {
    width: 12px;
    height: 12px;
    border: 1px solid #b0b0b0;
    background: #f6f6f6;
}
.drop svg {
    fill: #444;
    stroke: #444;
}
.grid td.selected {
    position: relative;
    overflow: visible;
}
.selected::before {
    content: "";
    position: absolute;
    inset: -2px -2px -2px -1px;
    border: 2px solid #217346;
}
.selected::after {
    content: "";
    position: absolute;
    right: -3px;
    bottom: -3px;
    width: 5px;
    height: 5px;
    background: #217346;
    border: solid #fff;
    border-width: 1px 0 0 1px;
}
.watermark {
    position: absolute;
    right: 55px;
    bottom: -7px;
    z-index: 2;
    display: flex;
    flex-direction: column;
    font-size: 11px;
    line-height: 15px;
    color: rgba(110, 110, 110, 0.6);
}
.watermark strong {
    font-size: 15px;
    line-height: 18px;
    font-weight: normal;
}

/* scroll bars */
.vscroll {
    display: flex;
    flex-direction: column;
    width: 15px;
    padding: 1px 2px 0 1px;
}
.vscroll button, .hscroll button {
    flex: none;
    width: 12px;
    height: 12px;
    border: 1px solid #ababab;
    background: #fff;
}
.vtrack {
    flex: 1;
    width: 12px;
    padding-top: 58px;
    background: #f0f0f0;
}
.vthumb {
    height: 81%;
    border: 1px solid #ababab;
    background: #fff;
}
.tri {
    border: 3px solid transparent;
}
.up {
    border-top: none;
    border-bottom-color: #222;
}
.down {
    border-bottom: none;
    border-top-color: #222;
}
.left {
    border-left: none;
    border-right-color: #222;
}
.right {
    border-right: none;
    border-left-color: #222;
}

/* sheet tabs */
.sheetbar {
    display: flex;
    height: 23px;
    border-top: 1px solid #ababab;
    border-bottom: 1px solid #c6c6c6;
    font-size: 10px;
    color: #444;
}
.sheet-nav {
    display: flex;
    justify-content: center;
    gap: 15px;
    width: 75px;
    padding-right: 10px;
    line-height: 20px;
    color: #b0b0b0;
}
.sheet-tab {
    height: 15px;
    margin-top: 3px;
    padding: 0 10px 0 8px;
    line-height: 15px;
    border-left: 1px solid #ababab;
}
.sheet-tab.active {
    height: 19px;
    margin-top: -1px;
    padding: 3px 10px 0;
    border-bottom: 2px solid #217346;
    background: #fff;
    color: #217346;
    font-weight: bold;
}
.sheet-tab.active + .sheet-tab {
    border-left: none;
    border-right: 1px solid #ababab;
}
.add {
    margin: 0 25px;
}
.add svg {
    fill: none;
    stroke: #777;
}
.hscroll {
    display: flex;
    align-items: center;
    width: 28%;
    margin: 0 16px 0 auto;
}
.htrack {
    flex: 1;
    padding-right: 15px;
    background: #ededed;
}
.hthumb {
    height: 12px;
    border: 1px solid #ababab;
    background: #fff;
}

/* status bar */
.status {
    display: flex;
    align-items: center;
    height: 16px;
    padding: 0 5px;
    background: #f3f2f1;
}
.access, .addins {
    display: flex;
    align-items: center;
    gap: 1px;
}
.access {
    margin-left: 14px;
}
.addins {
    margin-left: auto;
}
.views {
    display: flex;
    margin-left: 14px;
}
.view {
    width: 30px;
    height: 16px;
}
.view.on {
    background: #d2d0ce;
}
.zoom {
    display: flex;
    align-items: center;
    gap: 4px;
    width: 127px;
    margin-left: 4px;
}
.zoom button {
    font-size: 12px;
    line-height: 12px;
}
.zoom input {
    flex: 1;
    width: 40px;
    height: 10px;
    appearance: none;
    background: linear-gradient(#777, #777) center / 100% 1px no-repeat;
}
.zoom input::-webkit-slider-thumb {
    appearance: none;
    width: 3px;
    height: 9px;
    background: #333;
}
.zoom span {
    margin-left: 6px;
}

/* taskbar */
.taskbar {
    display: flex;
    height: 30px;
    background: linear-gradient(90deg, #1f3840, #1e3340 60%, #1a2742);
    color: #fff;
}
.start {
    width: 36px;
}
.task-search {
    display: flex;
    align-items: center;
    gap: 8px;
    width: 258px;
    padding-left: 9px;
    background: #f1f1f1;
    border-bottom: 1px solid #bbb;
    color: #444;
    font-size: 11px;
}
.task-search svg {
    fill: none;
    stroke: #333;
}
.task-search input::placeholder {
    color: #333;
    opacity: 1;
}
.apps {
    display: flex;
    width: 52%;
}
.app {
    position: relative;
    flex: 1;
}
.app b {
    position: absolute;
    left: 10px;
    top: 10px;
    width: 8px;
    font-size: 8px;
    line-height: 10px;
}
.app.current {
    background: #435862;
}
.app.open::after {
    content: "";
    position: absolute;
    bottom: 0;
    left: 3px;
    right: 3px;
    height: 2px;
    background: #76b9ed;
}
.app.current::after {
    left: 0;
    right: 0;
}
.tray {
    display: flex;
    align-items: center;
    gap: 5px;
    margin-left: auto;
    padding-right: 13px;
}
.temp {
    margin-right: 8px;
    font-size: 11px;
}
.t-ico {
    fill: none;
    stroke: #fff;
}
.clock {
    padding-right: 4px;
    line-height: 14px;
    text-align: center;
}
.notify {
    position: relative;
    width: 20px;
    height: 20px;
}
.count {
    position: absolute;
    right: 0;
    bottom: 0;
    width: 10px;
    height: 10px;
    border: 1px solid #aaa;
    border-radius: 50%;
    background: #333;
    font-size: 8px;
    line-height: 8px;
}
```

FILE: script.js
```
// column letters and their widths
const columns = {
    A: 55, B: 91, C: 105, D: 99, E: 79, F: 100, G: 128,
    H: 105, I: 79, J: 105, K: 55, L: 56, M: 56, N: 56
};
const firstRow = 6;
const lastRow = 30;
const selected = "B17";

const funnel = '<path d="M4 2h5v1L7 5v3H6V5L4 3z"/><path d="M1 7h1"/>';
const sortAsc = '<path d="M7 2v6M5 7h1M2 7h2"/>';
const funnelSort = '<path d="M5 2h4v1L7.500 5v3H7V5L5 3z"/><path d="M2 2v5"/>';

// pivot tables, top left cell first
const pivots = [
    { col: "B", row: 6, values: true, rows: [
        ["Values", ""],
        ["Count of Date", "34,866"],
        ["Sum of Quantity", "69,820"],
        ["Sum of Total Cost", "20,082,966"],
        ["Sum of Total_Revenue", "22,344,575"],
        ["Sum of Profit/Loss", "2,261,609"]
    ] },
    { col: "B", row: 14, icon: funnel, rows: [
        ["Row Labels", "Sum of Profit/Loss"],
        ["2015", "288622.83"],
        ["January", "-5778.7"],
        ["February", "-4079.65"],
        ["March", "-8163.79"],
        ["April", "-4945.69"],
        ["May", "-7801.45"],
        ["June", "-8690.61"],
        ["July", "15104.47"],
        ["August", "65926.24"],
        ["September", "62172.33"],
        ["October", "62950.66"],
        ["November", "54480.9"],
        ["December", "67448.12"],
        ["2016", "1972985.85"],
        ["January", "280204.25"],
        ["February", "263640.18"]
    ] },
    { col: "E", row: 7, icon: funnel, rows: [
        ["Row Labels", "Sum of Profit/Loss"],
        ["F", "1080259.22"],
        ["M", "1181349.46"],
        ["Grand Total", "2261608.68"]
    ] },
    { col: "E", row: 12, icon: sortAsc, rows: [
        ["Row Labels", "Sum of Profit/Loss"],
        ["Aged", "5849"],
        ["Elder", "37360.22"],
        ["Old Adult", "374089.04"],
        ["Youth", "808695.79"],
        ["Adult", "1035614.63"],
        ["Grand Total", "2261608.68"]
    ] },
    { col: "E", row: 20, icon: funnel, rows: [
        ["Row Labels", "Sum of Total Cost", "Sum of Total_Revenue", "Sum of Profit/Loss"],
        ["Accessories", "6041896.06", "7420663.12", "1378767.06"],
        ["Clothing", "2892324.94", "3437556.95", "545232.01"],
        ["Phones", "11148745.02", "11486354.63", "337609.61"],
        ["Grand Total", "20082966.02", "22344574.7", "2261608.68"]
    ] },
    { col: "I", row: 11, icon: funnelSort, rows: [
        ["Row Labels", "Sum of Profit/Loss"],
        ["Edo", "58709.25"],
        ["Adamawa", "98261.96"],
        ["Borno", "124348.45"],
        ["Benue", "154458.17"],
        ["Bauchi", "206341.1"],
        ["Abia", "207225.1"],
        ["Anambra", "217394.61"],
        ["Akwa Ibom", "236515.63"],
        ["Abuja", "328955.9"],
        ["Lagos", "393049.61"],
        ["Grand Total", "2025259.78"]
    ] }
];

const letters = Object.keys(columns);
const cells = {};

pivots.forEach(pivot => {
    const start = letters.indexOf(pivot.col);
    pivot.rows.forEach((values, r) => {
        const next = pivot.rows[r + 1];
        values.forEach((value, c) => {
            const cls = ["pivot"];
            let html = value;
            const year = /^20\d\d$/.test(values[0]);
            if (r === 0 || values[0] === "Grand Total") cls.push("shade", "strong");
            if (year) cls.push("strong");
            if (r === 0 || year || (next && next[0] === "Grand Total")) cls.push("rule");
            if (r > 0 && c > 0) cls.push("num");
            if (pivot.values && c > 0) cls.push("wide");
            if (c === values.length - 1) cls.push("edge");
            if (!next && values[0] !== "Grand Total") cls.push("last");
            if (pivot.row === 14 && r > 0 && c === 0) {
                if (year) html = '<span class="collapse-row"></span>' + value;
                else cls.push("month");
            }
            if (pivot.icon && r === 0 && c === 0) {
                html = `<div class="label">${value}<button class="drop" aria-label="Filter"><svg width="10" height="10" viewBox="0 0 10 10">${pivot.icon}</svg></button></div>`;
            }
            cells[letters[start + c] + (pivot.row + r)] = { cls, html };
        });
    });
});

let html = '<colgroup><col style="width:26px">';
letters.forEach(l => html += `<col style="width:${columns[l]}px">`);
html += '</colgroup><thead><tr><th><span class="corner"></span></th>';
letters.forEach(l => html += `<th class="${selected[0] === l ? "on" : ""}">${l}</th>`);
html += '</tr></thead><tbody><tr class="sliver"><th></th>' + "<td></td>".repeat(letters.length) + "</tr>";

for (let row = firstRow; row <= lastRow; row++) {
    html += `<tr><th class="${selected === "B" + row ? "on" : ""}">${row}</th>`;
    letters.forEach(l => {
        const cell = cells[l + row];
        const extra = l + row === selected ? " selected" : "";
        html += cell ? `<td class="${cell.cls.join(" ")}${extra}">${cell.html}</td>` : "<td></td>";
    });
    html += "</tr>";
}
document.getElementById("grid").innerHTML = html + "</tbody>";
```
